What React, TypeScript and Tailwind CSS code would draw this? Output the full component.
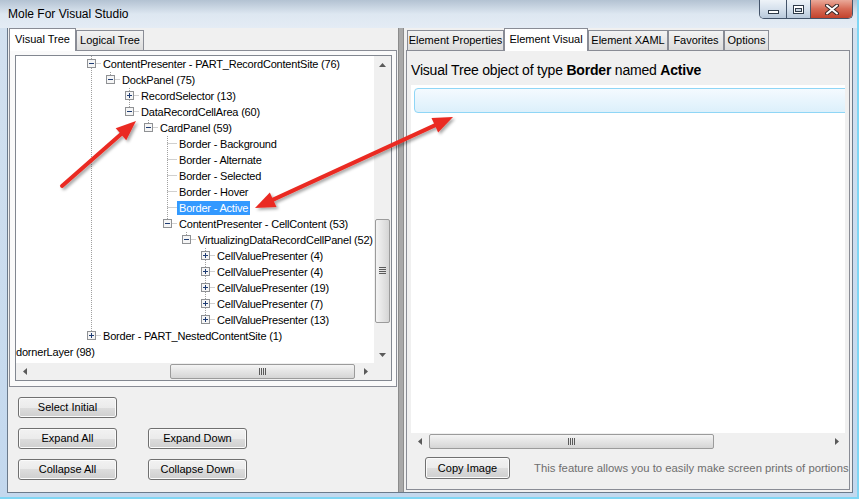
import React from 'react';

type Row = { level: number; text: string; box?: '+' | '-'; last?: boolean; pass?: number[]; sel?: boolean };

const LINE = '#a0a0a0';

const rows: Row[] = [
  { level: 0, text: 'ContentPresenter - PART_RecordContentSite (76)', box: '-' },
  { level: 1, text: 'DockPanel (75)', box: '-', last: true, pass: [0] },
  { level: 2, text: 'RecordSelector (13)', box: '+', pass: [0] },
  { level: 2, text: 'DataRecordCellArea (60)', box: '-', last: true, pass: [0] },
  { level: 3, text: 'CardPanel (59)', box: '-', last: true, pass: [0] },
  { level: 4, text: 'Border - Background', pass: [0] },
  { level: 4, text: 'Border - Alternate', pass: [0] },
  { level: 4, text: 'Border - Selected', pass: [0] },
  { level: 4, text: 'Border - Hover', pass: [0] },
  { level: 4, text: 'Border - Active', pass: [0], sel: true },
  { level: 4, text: 'ContentPresenter - CellContent (53)', box: '-', last: true, pass: [0] },
  { level: 5, text: 'VirtualizingDataRecordCellPanel (52)', box: '-', last: true, pass: [0] },
  { level: 6, text: 'CellValuePresenter (4)', box: '+', pass: [0] },
  { level: 6, text: 'CellValuePresenter (4)', box: '+', pass: [0] },
  { level: 6, text: 'CellValuePresenter (19)', box: '+', pass: [0] },
  { level: 6, text: 'CellValuePresenter (7)', box: '+', pass: [0] },
  { level: 6, text: 'CellValuePresenter (13)', box: '+', last: true, pass: [0] },
  { level: 0, text: 'Border - PART_NestedContentSite (1)', box: '+', last: true },
];

function TreeRow({ row }: { row: Row }) {
  const c = 75.5 + 19 * row.level;
  const w = 85 + 19 * row.level;
  return (
    <div className="flex h-[16px] items-center whitespace-nowrap">
      <svg width={w} height={16} className="shrink-0">
        {(row.pass ?? []).map((k) => (
          <line key={k} x1={75.5 + 19 * k} y1={0} x2={75.5 + 19 * k} y2={16} stroke={LINE} strokeDasharray="1 1" />
        ))}
        <line x1={c} y1={0} x2={c} y2={row.last ? 8 : 16} stroke={LINE} strokeDasharray="1 1" />
        <line x1={c} y1={7.5} x2={w} y2={7.5} stroke={LINE} strokeDasharray="1 1" />
        {row.box && (
          <g>
            <rect x={c - 4} y={3.5} width={8} height={8} fill="#f5f5f5" stroke="#8f9194" />
            <line x1={c - 2.5} y1={7.5} x2={c + 2.5} y2={7.5} stroke="#1f3d74" />
            {row.box === '+' && <line x1={c} y1={5} x2={c} y2={10} stroke="#1f3d74" />}
          </g>
        )}
      </svg>
      <span
        className={
          row.sel
            ? 'shrink-0 h-[14px] px-[2px] leading-[14px] bg-[#3399ff] text-white'
            : 'shrink-0 h-[14px] px-[2px] leading-[14px]'
        }
      >
        {row.text}
      </span>
    </div>
  );
}

function Arrow({ dir }: { dir: 'up' | 'down' | 'left' | 'right' }) {
  const pts = { up: '0,4 3.5,0 7,4', down: '0,0 7,0 3.5,4', left: '4,0 4,7 0,3.5', right: '0,0 0,7 4,3.5' }[dir];
  const vertical = dir === 'up' || dir === 'down';
  return (
    <div className="flex h-[17px] w-[17px] shrink-0 items-center justify-center">
      <svg width={vertical ? 7 : 4} height={vertical ? 4 : 7}>
        <polygon points={pts} fill="#5a5a5a" />
      </svg>
    </div>
  );
}

function VScroll() {
  return (
    <div className="flex w-[17px] flex-col bg-[#f0f0f0]">
      <Arrow dir="up" />
      <div className="h-[146px]" />
      <div className="mx-[1px] flex h-[104px] items-center justify-center rounded-[2px] border border-[#9b9b9b] bg-linear-to-r from-[#f4f4f4] to-[#d5d5d5]">
        <svg width={7} height={8}>
          {[0.5, 2.5, 4.5, 6.5].map((y) => (
            <line key={y} x1={0} y1={y} x2={7} y2={y} stroke="#5a5a5a" />
          ))}
        </svg>
      </div>
      <div className="flex-1" />
      <Arrow dir="down" />
    </div>
  );
}

function HScroll({ before, thumb, width }: { before: string; thumb: string; width: string }) {
  return (
    <div className={`flex h-[17px] bg-[#f0f0f0] ${width}`}>
      <Arrow dir="left" />
      <div className={before} />
      <div className={`my-[1px] flex items-center justify-center rounded-[2px] border border-[#9b9b9b] bg-linear-to-b from-[#f4f4f4] to-[#d5d5d5] ${thumb}`}>
        <svg width={8} height={7}>
          {[0.5, 2.5, 4.5, 6.5].map((x) => (
            <line key={x} x1={x} y1={0} x2={x} y2={7} stroke="#5a5a5a" />
          ))}
        </svg>
      </div>
      <div className="flex-1" />
      <Arrow dir="right" />
    </div>
  );
}

function Tab({ label, w, active }: { label: string; w: string; active?: boolean }) {
  if (active) {
    return (
      <div className={`relative z-10 -mb-px flex h-[23px] items-center justify-center border border-b-0 border-[#898c95] bg-white pb-[2px] ${w}`}>
        {label}
      </div>
    );
  }
  return (
    <div className={`flex h-[20px] items-center justify-center border border-b-0 border-[#898c95] bg-linear-to-b from-[#f3f3f3] to-[#dcdcdc] ${w}`}>
      {label}
    </div>
  );
}

function Button({ label, w }: { label: string; w: string }) {
  return (
    <div
      className={`flex items-center justify-center rounded-[3px] border border-[#707070] bg-[linear-gradient(to_bottom,#f2f2f2_0%,#ebebeb_50%,#dddddd_50%,#cfcfcf_100%)] shadow-[inset_0_0_0_1px_#fbfbfb] ${w}`}
    >
      {label}
    </div>
  );
}

function CaptionButtons() {
  return (
    <div className="flex h-[19px] overflow-hidden rounded-b-[5px] border border-t-0 border-[#44546a]">
      <div className="flex w-[27px] items-end justify-center border-r border-[#44546a] bg-linear-to-b from-[#eef3f8] via-[#d6e1ed] to-[#b9c9db] pb-[4px]">
        <div className="h-[4px] w-[11px] border border-[#2e3a48] bg-white" />
      </div>
      <div className="flex w-[24px] items-center justify-center border-r border-[#44546a] bg-linear-to-b from-[#eef3f8] via-[#d6e1ed] to-[#b9c9db]">
        <div className="h-[9px] w-[11px] border border-[#2e3a48] bg-white px-[1px] pt-[2px] pb-[1px]">
          <div className="h-full w-full border border-[#2e3a48] bg-[#c9d4e0]" />
        </div>
      </div>
      <div className="flex w-[41px] items-center justify-center bg-linear-to-b from-[#e9a999] via-[#d66a55] to-[#c2412c]">
        <svg width={14} height={11}>
          <path d="M2 1.5 L12 9.5 M12 1.5 L2 9.5" stroke="#3b2a2a" strokeWidth={4} strokeLinecap="round" />
          <path d="M2 1.5 L12 9.5 M12 1.5 L2 9.5" stroke="#ffffff" strokeWidth={2} strokeLinecap="round" />
        </svg>
      </div>
    </div>
  );
}

function head(tipX: number, tipY: number, fromX: number, fromY: number) {
  const dx = tipX - fromX;
  const dy = tipY - fromY;
  const len = Math.hypot(dx, dy);
  const ux = dx / len;
  const uy = dy / len;
  const bx = tipX - ux * 20;
  const by = tipY - uy * 20;
  const nx = -uy * 8;
  const ny = ux * 8;
  return {
    points: `${tipX},${tipY} ${bx + nx},${by + ny} ${bx - nx},${by - ny}`,
    base: [tipX - ux * 14, tipY - uy * 14] as [number, number],
  };
}

function RedArrows() {
  const a1 = head(136, 121, 62, 186);
  const l2 = head(255, 208, 453, 117);
  const r2 = head(453, 117, 255, 208);
  return (
    <svg className="pointer-events-none absolute left-0 top-0" width={859} height={499}>
      <defs>
        <filter id="sh" x="-30%" y="-30%" width="160%" height="160%">
          <feDropShadow dx="2" dy="2" stdDeviation="1.6" floodColor="#000" floodOpacity="0.35" />
        </filter>
      </defs>
      <g filter="url(#sh)" fill="#ea2b22" stroke="#ea2b22" strokeLinecap="round">
        <line x1={62} y1={186} x2={a1.base[0]} y2={a1.base[1]} strokeWidth={4} />
        <polygon points={a1.points} stroke="none" />
        <line x1={l2.base[0]} y1={l2.base[1]} x2={r2.base[0]} y2={r2.base[1]} strokeWidth={4} />
        <polygon points={l2.points} stroke="none" />
        <polygon points={r2.points} stroke="none" />
      </g>
    </svg>
  );
}

export default function App() {
  return (
    <div className="relative h-[499px] w-[859px] overflow-hidden border-r-2 border-b-2 border-[#7fd6f4] bg-linear-to-b from-[#d3e1ef] to-[#c3d8ee] font-['Liberation_Sans',Arial,sans-serif] text-black">
      {/* title bar */}
      <div className="flex h-[28px] justify-between bg-linear-to-b from-[#b3c2d2] via-[#dde7f1] to-[#e4ecf5] pl-[8px] pr-[4px]">
        <div className="pt-[6px] text-[12px] leading-[16px]">Mole For Visual Studio</div>
        <CaptionButtons />
      </div>

      {/* client */}
      <div className="ml-[7px] flex h-[465px] w-[846px] border border-t-0 border-[#6b7a8b] bg-[#f0f0f0] text-[11px]">
        {/* left pane */}
        <div className="flex w-[389px] flex-col pl-[1px]">
          <div className="flex h-[22px] items-end">
            <Tab label="Visual Tree" w="w-[67px]" active />
            <Tab label="Logical Tree" w="w-[68px]" />
          </div>
          <div className="h-[337px] w-[388px] border border-[#898c95] bg-[#fafafa] pl-[5px] pt-[4px]">
            <div className="flex h-[326px] w-[377px] flex-col border border-[#828790] bg-white">
              <div className="flex h-[307px]">
                <div className="w-[358px] overflow-hidden tracking-[-0.2px]">
                  {rows.map((r, i) => (
                    <TreeRow key={i} row={r} />
                  ))}
                  <div className="flex h-[16px] items-center whitespace-nowrap">
                    <span className="h-[14px] shrink-0 leading-[14px]">dornerLayer (98)</span>
                  </div>
                </div>
                <VScroll />
              </div>
              <div className="flex h-[17px]">
                <HScroll width="w-[358px]" before="w-[137px]" thumb="w-[185px]" />
                <div className="w-[17px] bg-[#f0f0f0]" />
              </div>
            </div>
          </div>
          <div className="flex flex-col gap-[10px] pl-[9px] pt-[10px]">
            <Button label="Select Initial" w="h-[21px] w-[99px]" />
            <div className="flex gap-[31px]">
              <Button label="Expand All" w="h-[21px] w-[99px]" />
              <Button label="Expand Down" w="h-[21px] w-[99px]" />
            </div>
            <div className="flex gap-[31px]">
              <Button label="Collapse All" w="h-[21px] w-[99px]" />
              <Button label="Collapse Down" w="h-[21px] w-[99px]" />
            </div>
          </div>
        </div>

        {/* splitter */}
        <div className="flex w-[8px] px-[1px]">
          <div className="flex-1 border-x border-[#8c8c8c] bg-[#a9a9a9]" />
        </div>

        {/* right pane */}
        <div className="flex w-[447px] flex-col pl-[1px] pr-[2px] pb-[2px]">
          <div className="flex h-[22px] items-end pl-[1px]">
            <Tab label="Element Properties" w="w-[97px]" />
            <Tab label="Element Visual" w="w-[84px]" active />
            <Tab label="Element XAML" w="w-[80px]" />
            <Tab label="Favorites" w="w-[56px]" />
            <Tab label="Options" w="w-[45px]" />
          </div>
          <div className="flex flex-1 flex-col border border-[#898c95] bg-[#f0f0f0] pl-[4px]">
            <div className="mt-[9px] h-[20px] text-[14px] leading-[20px] tracking-[-0.2px]">
              Visual Tree object of type <b>Border</b> named <b>Active</b>
            </div>
            <div className="mt-[5px] flex h-[365px] w-[434px] flex-col bg-white">
              <div className="flex-1 overflow-hidden pl-[3px] pt-[3px]">
                <div className="h-[25px] w-[520px] rounded-[4px] border border-[#8fd6f6] bg-linear-to-b from-[#f4faff] to-[#dcf0fb]" />
              </div>
              <HScroll width="w-[434px]" before="w-[1px]" thumb="w-[285px]" />
            </div>
            <div className="mt-[7px] flex items-center whitespace-nowrap">
              <div className="ml-[14px] shrink-0">
                <Button label="Copy Image" w="h-[22px] w-[85px]" />
              </div>
              <div className="ml-[24px] text-[11.3px] text-[#6e6e6e]">
                This feature allows you to easily make screen prints of portions
              </div>
            </div>
          </div>
        </div>
      </div>

      <RedArrows />
    </div>
  );
}
